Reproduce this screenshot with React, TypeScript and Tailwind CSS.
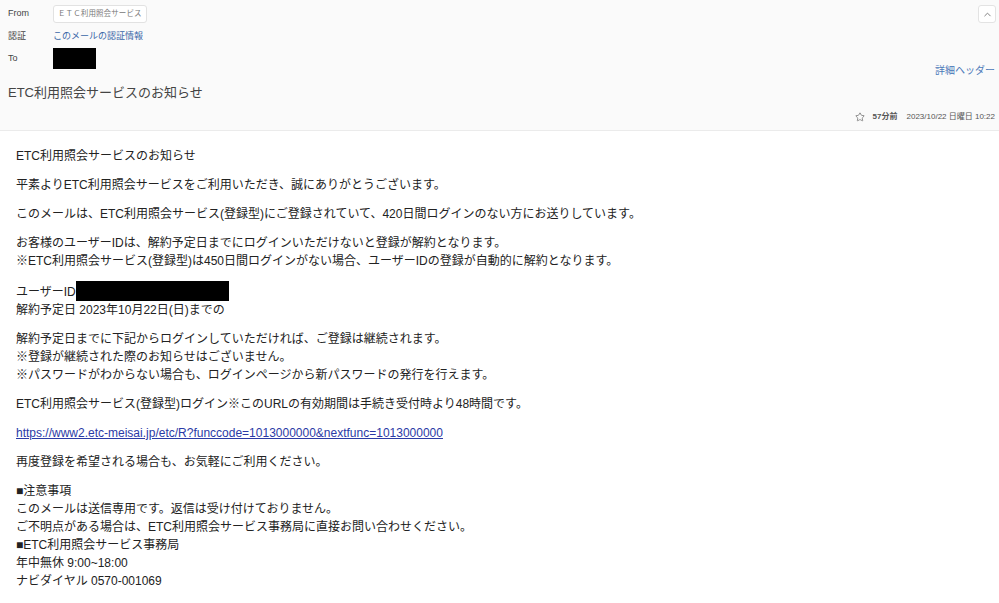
import { Star, ChevronUp } from "lucide-react";

const font = "font-['Liberation_Sans','Noto_Sans_CJK_JP',sans-serif]";

const Header = () => {
  return (
    <div className="bg-[#fafafa] border-b border-[#ebebeb] h-[131px] relative">
      <div className="absolute right-[3px] top-[5px] w-[18px] h-[18px] border border-[#e3e3e3] rounded-[3px] bg-white flex items-center justify-center">
        <ChevronUp size={11} strokeWidth={2} color="#777" />
      </div>

      <div className="pl-2 pt-[5px] text-[9px] text-[#444]">
        <div className="flex items-center h-[18px]">
          <span className="w-[45px]">From</span>
          <span className="h-[18px] px-[4px] flex items-center border border-[#e2e2e2] rounded-[3px] bg-white text-[7.5px] text-[#777] tracking-[0.1px]">
            ＥＴＣ利用照会サービス
          </span>
        </div>
        <div className="flex items-center h-[18px] mt-[5px]">
          <span className="w-[45px]">認証</span>
          <span className="text-[#3a67a8]">このメールの認証情報</span>
        </div>
        <div className="flex items-center h-[21px] mt-[2px]">
          <span className="w-[45px]">To</span>
          <span className="w-[43px] h-[21px] bg-black" />
        </div>
      </div>

      <div className="flex justify-end pr-[4px] h-[14px] items-center -mt-[6px] text-[10px] text-[#4a78b8]">
        詳細ヘッダー
      </div>

      <div className="pl-2 mt-[7px] text-[13px] leading-[18px] text-[#444]">
        ETC利用照会サービスのお知らせ
      </div>

      <div className="flex justify-end items-center pr-[4px] mt-[9px] h-[12px] gap-[5px] text-[8px] text-[#555]">
        <Star size={10} strokeWidth={1.5} color="#555" />
        <span className="font-bold ml-[3px]">57分前</span>
        <span className="ml-[4px]">2023/10/22 日曜日 10:22</span>
      </div>
    </div>
  );
};

const P = ({ children }: { children: React.ReactNode }) => (
  <p className="mb-[11px]">{children}</p>
);

export default function App() {
  return (
    <div className={`${font} w-[999px] h-[603px] bg-white overflow-hidden`}>
      <Header />
      <div className="pl-4 pt-4 text-[12px] leading-[18px] text-[#222]">
        <P>ETC利用照会サービスのお知らせ</P>
        <P>平素よりETC利用照会サービスをご利用いただき、誠にありがとうございます。</P>
        <P>このメールは、ETC利用照会サービス(登録型)にご登録されていて、420日間ログインのない方にお送りしています。</P>
        <P>
          お客様のユーザーIDは、解約予定日までにログインいただけないと登録が解約となります。
          <br />
          ※ETC利用照会サービス(登録型)は450日間ログインがない場合、ユーザーIDの登録が自動的に解約となります。
        </P>
        <P>
          ユーザーID
          <span className="inline-block w-[153px] h-[20px] bg-black align-[-5px]" />
          <br />
          解約予定日 2023年10月22日(日)までの
        </P>
        <P>
          解約予定日までに下記からログインしていただければ、ご登録は継続されます。
          <br />
          ※登録が継続された際のお知らせはございません。
          <br />
          ※パスワードがわからない場合も、ログインページから新パスワードの発行を行えます。
        </P>
        <P>ETC利用照会サービス(登録型)ログイン※このURLの有効期間は手続き受付時より48時間です。</P>
        <P>
          <a className="text-[#2b3aa6] underline">
            https://www2.etc-meisai.jp/etc/R?funccode=1013000000&amp;nextfunc=1013000000
          </a>
        </P>
        <P>再度登録を希望される場合も、お気軽にご利用ください。</P>
        <P>
          ■注意事項
          <br />
          このメールは送信専用です。返信は受け付けておりません。
          <br />
          ご不明点がある場合は、ETC利用照会サービス事務局に直接お問い合わせください。
          <br />
          ■ETC利用照会サービス事務局
          <br />
          年中無休 9:00~18:00
          <br />
          ナビダイヤル 0570-001069
        </P>
      </div>
    </div>
  );
}
